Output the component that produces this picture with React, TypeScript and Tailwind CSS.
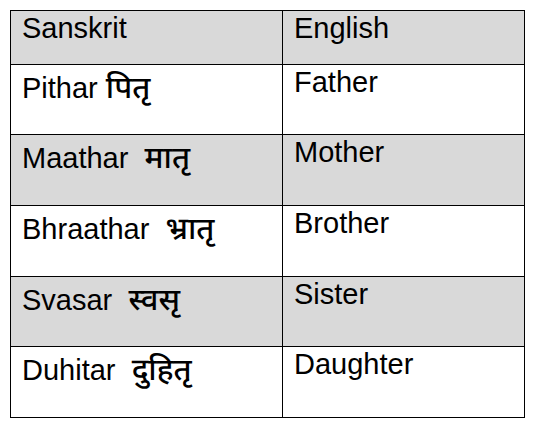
import React from "react";

const rows: { la: string; dev: string; gap: string; en: string; h: string; bg: string }[] = [
  { la: "Pithar", dev: "पितृ", gap: " ", en: "Father", h: "h-[70px]", bg: "bg-white" },
  { la: "Maathar", dev: "मातृ", gap: "  ", en: "Mother", h: "h-[71px]", bg: "bg-[#d9d9d9]" },
  { la: "Bhraathar", dev: "भ्रातृ", gap: "  ", en: "Brother", h: "h-[71px]", bg: "bg-white" },
  { la: "Svasar", dev: "स्वसृ", gap: "  ", en: "Sister", h: "h-[70px]", bg: "bg-[#d9d9d9]" },
  { la: "Duhitar", dev: "दुहितृ", gap: "  ", en: "Daughter", h: "h-[71px]", bg: "bg-white" },
];

export default function App() {
  return (
    <div className="w-[539px] h-[429px] bg-white pt-[10px] pl-[10px] text-black font-['Liberation_Sans',Arial,'Noto_Sans_Devanagari','Lohit_Devanagari',sans-serif] text-[29px] leading-[29px]">
      <div className="w-[515px] grid grid-cols-[272px_242px] border-t border-l border-black">
        <div className="h-[54px] bg-[#d9d9d9] border-r border-b border-black pl-[11px] pt-[3px]">Sanskrit</div>
        <div className="h-[54px] bg-[#d9d9d9] border-r border-b border-black pl-[11px] pt-[3px]">English</div>
        {rows.map((r) => (
          <React.Fragment key={r.en}>
            <div className={`${r.h} ${r.bg} border-r border-b border-black pl-[11px] pt-[8px] whitespace-pre`}>
              {r.la}
              {r.gap}
              <span className="text-[31px] font-medium">{r.dev}</span>
            </div>
            <div className={`${r.h} ${r.bg} border-r border-b border-black pl-[11px] pt-[3px]`}>{r.en}</div>
          </React.Fragment>
        ))}
      </div>
    </div>
  );
}
